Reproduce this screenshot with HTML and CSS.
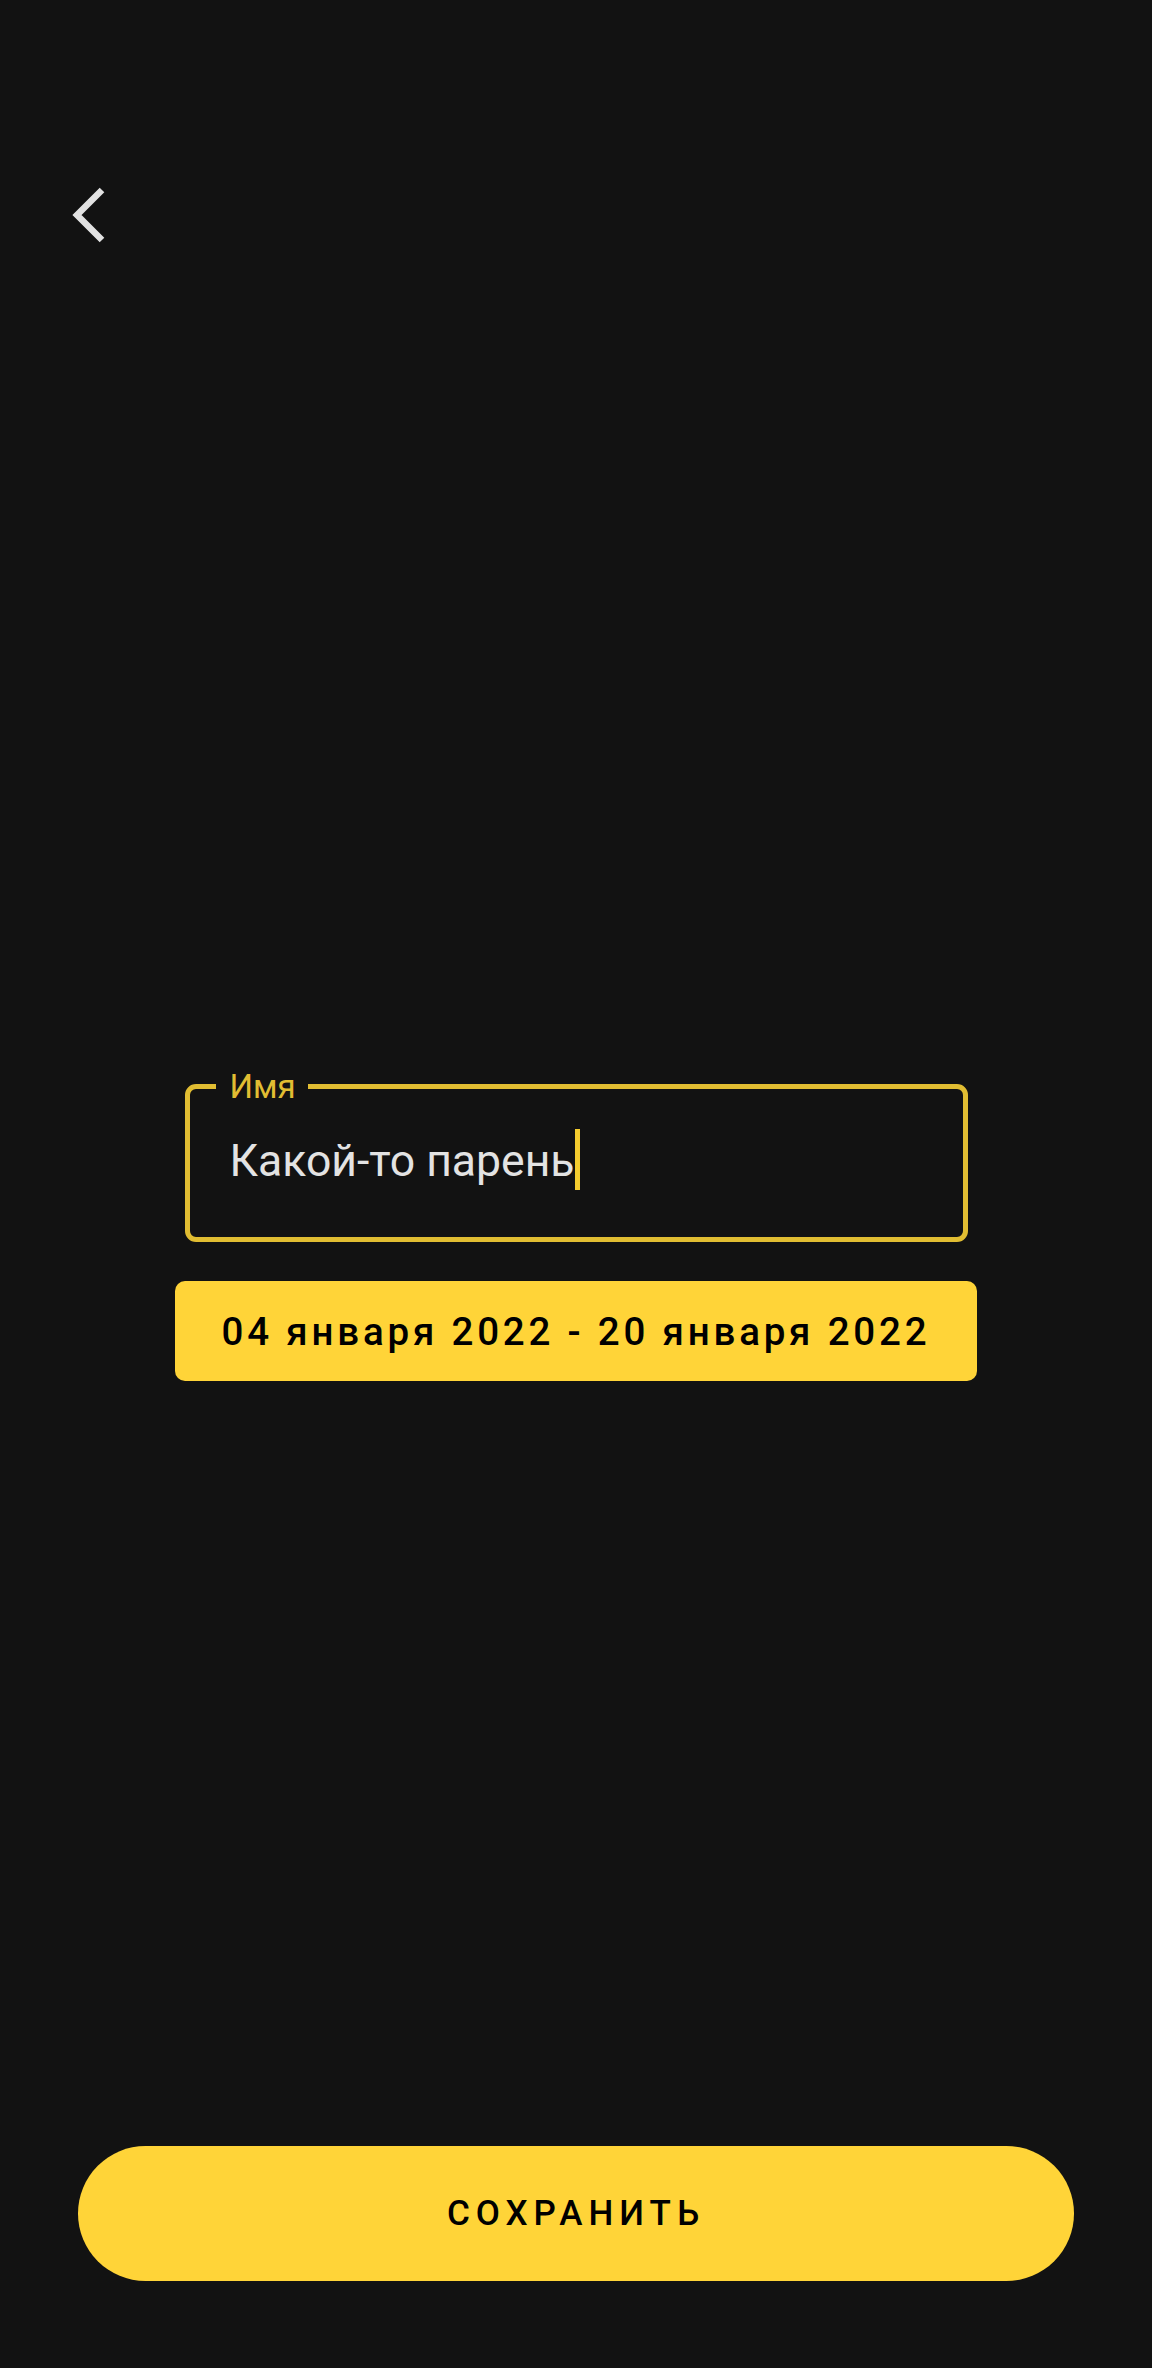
FILE: index.html
```html
<!DOCTYPE html>
<html lang="ru">
<head>
<meta charset="utf-8">
<title>Имя</title>
<link rel="stylesheet" href="styles.css">
</head>
<body>
<div class="screen">
  <header class="topbar">
    <button class="back" aria-label="Назад">
      <svg class="back-icon" width="44" height="64" viewBox="0 0 44 64">
        <path d="M34 6 L9 31 L34 56" fill="none" stroke="#e2e2e2" stroke-width="6.5" stroke-linejoin="miter" stroke-linecap="butt"/>
      </svg>
    </button>
  </header>
  <main class="form">
    <div class="field">
      <span class="field-label">Имя</span>
      <div class="field-row">
        <span class="field-value">Какой-то парень</span><span class="caret"></span>
      </div>
    </div>
    <button class="date-btn">04 января 2022 - 20 января 2022</button>
  </main>
  <div class="spacer"></div>
  <footer class="actions">
    <button class="save-btn">СОХРАНИТЬ</button>
  </footer>
</div>
</body>
</html>
```
FILE: styles.css
```css
html, body {
  margin: 0;
  padding: 0;
  background: #121212;
}
body {
  font-family: Roboto, "Noto Sans", "Liberation Sans", sans-serif;
}
.screen {
  height: 2368px;
  box-sizing: border-box;
  display: flex;
  flex-direction: column;
  padding-bottom: 87px;
}
.topbar {
  display: flex;
  padding: 184px 0 0 68px;
}
.back {
  background: none;
  border: none;
  padding: 0;
  margin: 0;
  display: block;
  cursor: pointer;
}
.back-icon {
  display: block;
}
.form {
  margin-top: 836px;
  display: flex;
  flex-direction: column;
  align-items: center;
}
.field {
  position: relative;
  width: 783px;
  height: 158px;
  box-sizing: border-box;
  border: 5px solid #e1bd32;
  border-radius: 11px;
  padding: 40px 0 0 40px;
}
.field-label {
  position: absolute;
  left: 26px;
  top: -21px;
  padding: 0 12px 0 14px;
  background: #121212;
  color: #e1bd32;
  font-size: 33px;
  line-height: 37px;
}
.field-row {
  display: flex;
  align-items: flex-start;
}
.field-value {
  color: #e3e3e3;
  font-size: 44.5px;
  line-height: 65px;
  white-space: nowrap;
}
.caret {
  width: 5px;
  height: 61px;
  margin-left: 1px;
  background: #f5cc2e;
  flex: none;
}
.date-btn {
  margin-top: 39px;
  width: 802px;
  height: 100px;
  border: none;
  border-radius: 10px;
  background: #ffd438;
  color: #000;
  font-family: Roboto, "Noto Sans", "Liberation Sans", sans-serif;
  font-weight: 500;
  font-size: 38.5px;
  line-height: 102px;
  letter-spacing: 3.8px;
  padding: 0;
  text-align: center;
  white-space: nowrap;
}
.spacer {
  flex: 1;
}
.actions {
  display: flex;
  justify-content: center;
}
.save-btn {
  width: 996px;
  height: 135px;
  border: none;
  border-radius: 68px;
  background: #ffd438;
  color: #000;
  font-family: Roboto, "Noto Sans", "Liberation Sans", sans-serif;
  font-weight: 500;
  font-size: 35px;
  line-height: 135px;
  letter-spacing: 6px;
  padding: 0;
  text-align: center;
}
```
